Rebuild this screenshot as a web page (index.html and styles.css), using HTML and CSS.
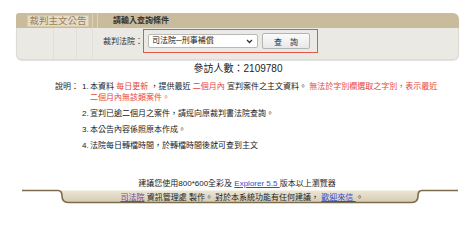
FILE: index.html
```html
<!DOCTYPE html>
<html lang="zh-Hant">
<head>
<meta charset="utf-8">
<title>裁判主文公告</title>
<link rel="stylesheet" href="styles.css">
</head>
<body>
<div class="panel">
  <div class="panel-head">
    <div class="tab">裁判主文公告</div>
    <div class="sep"></div>
    <div class="head-title">請輸入查詢條件</div>
  </div>
  <div class="panel-body">
    <div class="ghost g1"></div><div class="ghost g2"></div><div class="ghost g3"></div>
    <span class="field-label">裁判法院：</span>
    <div class="query-box">
      <div class="select">
        <span class="select-text">司法院─刑事補償</span>
        <svg class="chev" width="7" height="5" viewBox="0 0 7 5"><path d="M1 1 L3.5 3.5 L6 1" fill="none" stroke="#333" stroke-width="1.3"/></svg>
      </div>
      <button class="btn" type="button">查　詢</button>
    </div>
  </div>
</div>

<div class="visitors">參訪人數：2109780</div>

<div class="notes">
  <div class="notes-label">說明：</div>
  <div class="notes-list">
    <div class="item"><span class="num">1.</span><span class="txt">本資料 <span class="red">每日更新</span> ，提供最近 <span class="red">二個月內</span> 宣判案件之主文資料。 <span class="red">無法於字別欄選取之字別，表示最近<br>二個月內無該類案件。</span></span></div>
    <div class="item"><span class="num">2.</span><span class="txt">宣判已逾二個月之案件，請逕向原裁判書法院查詢。</span></div>
    <div class="item"><span class="num">3.</span><span class="txt">本公告內容係照原本作成。</span></div>
    <div class="item"><span class="num">4.</span><span class="txt">法院每日轉檔時間，於轉檔時間後就可查到主文</span></div>
  </div>
</div>

<div class="hint">建議您使用800*600全彩及 <a class="link" href="#">Explorer 5.5 </a>版本以上瀏覽器</div>

<div class="footer">
  <svg class="footer-shape" width="436" height="16" viewBox="0 0 436 16">
    <defs>
      <linearGradient id="fg" x1="0" y1="0" x2="0" y2="1">
        <stop offset="0" stop-color="#ebe5d4"/>
        <stop offset="1" stop-color="#d6ccb2"/>
      </linearGradient>
    </defs>
    <path d="M36 1.5 C39 1.5 40 3 40 7 C40 11.5 42 13.5 46 13.5 H390 C394 13.5 396 11.5 396 7 C396 3 397 1.5 400 1.5 Z" fill="url(#fg)"/>
    <path d="M0 1.5 H36 C39 1.5 40 3 40 7 C40 11.5 42 13.5 46 13.5 H390 C394 13.5 396 11.5 396 7 C396 3 397 1.5 400 1.5 H436" fill="none" stroke="#7d6c4b" stroke-width="1.6"/>
  </svg>
  <div class="footer-text"><a class="visited" href="#">司法院</a> 資訊管理處 製作。 對於本系統功能有任何建議， <a class="link" href="#">歡迎來信 </a>。</div>
</div>
</body>
</html>
```
FILE: styles.css
```css
* { box-sizing: border-box; }

body {
  margin: 0;
  width: 474px;
  height: 236px;
  background: #ffffff;
  color: #222222;
  font-family: "Liberation Sans", "Noto Sans CJK TC", sans-serif;
  font-size: 8px;
  line-height: 1;
  overflow: hidden;
}

.panel {
  margin: 13px 15px 0 16px;
}

.panel-head {
  height: 15px;
  background: #c9bc9c;
  border-radius: 3px 6px 0 0;
  display: flex;
  align-items: center;
  padding-left: 11px;
}

.tab {
  height: 12px;
  width: 62px;
  background: #e4dcc8;
  border: 1px solid #d5caae;
  color: #9a7f55;
  font-size: 9.5px;
  white-space: nowrap;
  display: flex;
  align-items: center;
  justify-content: center;
}

.sep {
  width: 6px;
  height: 15px;
  margin-left: 3px;
  border-left: 1px solid #dcd2b9;
  border-right: 1px solid #dcd2b9;
}

.head-title {
  margin-left: 15px;
  font-weight: bold;
  color: #333;
}

.panel-body {
  position: relative;
  height: 32px;
  background: #ebe9e4;
  border: 1px solid #dedbd3;
  border-top: none;
  border-radius: 0 0 6px 6px;
  box-shadow: 0 1px 1px rgba(0, 0, 0, 0.12);
  display: flex;
  align-items: flex-start;
  padding-left: 86px;
  padding-top: 1px;
}

.ghost {
  position: absolute;
  top: 0;
  bottom: 0;
  width: 1px;
  background: #e2dfd8;
}
.g1 { left: 36px; }
.g2 { left: 59px; }
.g3 { left: 75px; }

.field-label {
  margin-top: 9px;
  color: #333;
}

.query-box {
  height: 24px;
  width: 175px;
  border: 1px solid #e0584c;
  display: flex;
  align-items: center;
  padding: 0 4px;
  gap: 4px;
}

.select {
  width: 110px;
  height: 14px;
  background: #ffffff;
  border: 1px solid #b9b9b9;
  border-radius: 2px;
  display: flex;
  align-items: center;
  justify-content: space-between;
  padding: 0 4px 0 3px;
}

.btn {
  width: 48px;
  height: 16px;
  padding: 0;
  font-family: inherit;
  font-size: 8px;
  color: #333;
  background: linear-gradient(#fbfbfb, #e8e8e8);
  border: 1px solid #b4b4b4;
  border-radius: 2px;
}

.visitors {
  margin-top: 3px;
  text-align: center;
  font-size: 10px;
  line-height: 12px;
  padding-left: 2px;
}

.notes {
  display: flex;
  margin-top: 6px;
  padding-left: 55px;
}

.notes-label {
  width: 27px;
  flex: none;
  line-height: 11px;
}

.notes-list {
  width: 370px;
}

.item {
  display: flex;
  line-height: 11px;
  margin-bottom: 5px;
  white-space: nowrap;
}

.num {
  width: 8px;
  flex: none;
}

.red { color: #e8453c; }

.hint {
  margin-top: 22px;
  text-align: center;
  line-height: 11px;
}

.link {
  color: #2f4fd0;
  text-decoration: underline;
}

.visited {
  color: #6a4aa6;
  text-decoration: underline;
}

.footer {
  display: grid;
  margin: 0 0 0 22px;
  width: 436px;
  height: 16px;
}

.footer-shape,
.footer-text {
  grid-area: 1 / 1;
}

.footer-text {
  align-self: center;
  text-align: center;
  padding-top: 2px;
  padding-left: 4px;
  line-height: 10px;
}
```
